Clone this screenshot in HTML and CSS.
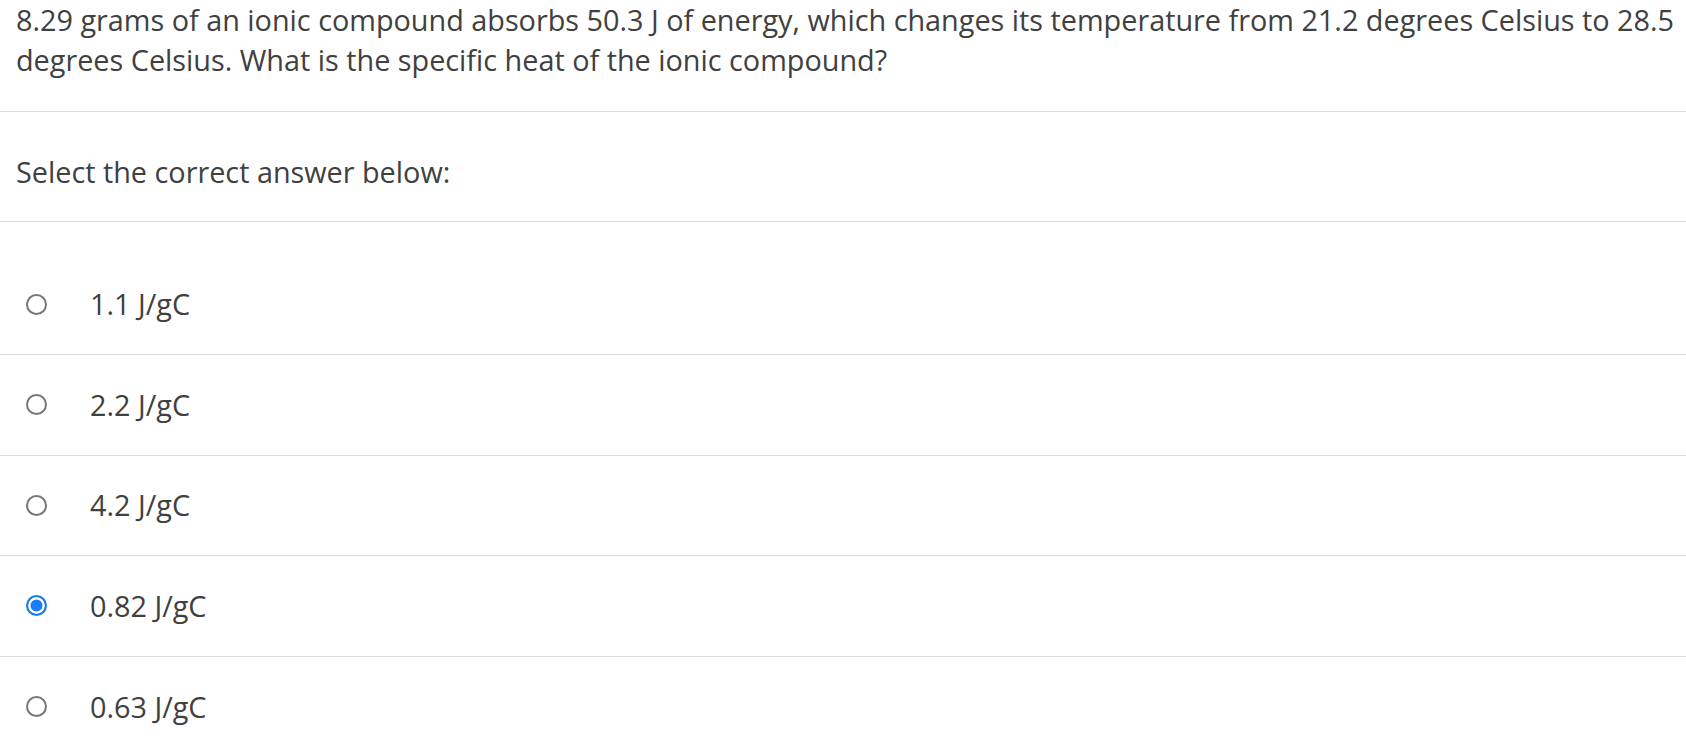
FILE: index.html
```html
<!DOCTYPE html>
<html lang="en">
<head>
<meta charset="utf-8">
<title>Question</title>
<link rel="stylesheet" href="styles.css">
</head>
<body>
<div class="question">8.29 grams of an ionic compound absorbs 50.3 J of energy, which changes its temperature from 21.2 degrees Celsius to 28.5 degrees Celsius. What is the specific heat of the ionic compound?</div>
<div class="prompt">Select the correct answer below:</div>
<ul class="options">
  <li class="option"><span class="radio"></span><span class="label">1.1 J/gC</span></li>
  <li class="option"><span class="radio"></span><span class="label">2.2 J/gC</span></li>
  <li class="option"><span class="radio"></span><span class="label">4.2 J/gC</span></li>
  <li class="option"><span class="radio checked"></span><span class="label">0.82 J/gC</span></li>
  <li class="option"><span class="radio"></span><span class="label">0.63 J/gC</span></li>
</ul>
</body>
</html>
```
FILE: styles.css
```css
html, body {
  margin: 0;
  padding: 0;
  background: #ffffff;
}
body {
  font-family: "Open Sans", "Liberation Sans", sans-serif;
  color: #404040;
  font-size: 28.8px;
  line-height: 40px;
}
.question {
  padding: 0 8px 31px 16px;
  border-bottom: 1px solid #dcdcdc;
}
.prompt {
  padding: 40px 16px 29px 16px;
  border-bottom: 1px solid #dcdcdc;
}
.options {
  list-style: none;
  margin: 0;
  padding: 32.4px 0 0 0;
}
.option {
  display: flex;
  align-items: center;
  height: 100.6px;
  box-sizing: border-box;
  border-bottom: 1px solid #dcdcdc;
  padding-left: 26px;
}
.radio {
  width: 21px;
  height: 21px;
  box-sizing: border-box;
  border: 2px solid #767676;
  border-radius: 50%;
  flex: none;
  margin-right: 43px;
}
.radio.checked {
  border-color: #1a7cf5;
  background: #1a7cf5;
  box-shadow: inset 0 0 0 2.5px #ffffff;
}
.label {
  line-height: 40px;
}
```
